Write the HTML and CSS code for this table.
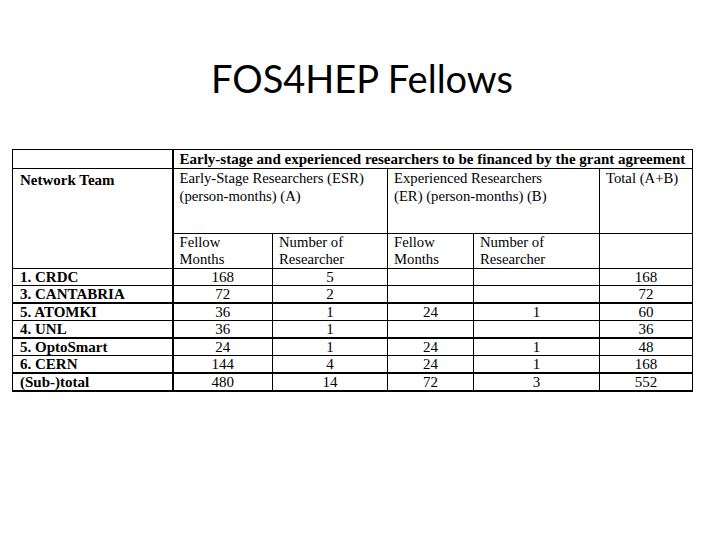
FILE: index.html
```html
<!DOCTYPE html>
<html>
<head>
<meta charset="utf-8">
<link rel="stylesheet" href="styles.css">
</head>
<body>
<h1 class="title">FOS4HEP Fellows</h1>
<table class="grid">
  <colgroup>
    <col class="c1"><col class="c2"><col class="c3"><col class="c4"><col class="c5"><col class="c6">
  </colgroup>
  <tr class="r-head">
    <td class="left-col"></td>
    <td colspan="5" class="bold">Early-stage and experienced researchers to be financed by the grant agreement</td>
  </tr>
  <tr class="r-desc">
    <td rowspan="2" class="left-col bold top nt">Network Team</td>
    <td colspan="2" class="top">Early-Stage Researchers (ESR)<br>(person-months) (A)</td>
    <td colspan="2" class="top">Experienced Researchers<br>(ER) (person-months) (B)</td>
    <td class="top">Total (A+B)</td>
  </tr>
  <tr class="r-sub">
    <td class="top">Fellow<br>Months</td>
    <td class="top">Number of<br>Researcher</td>
    <td class="top">Fellow<br>Months</td>
    <td class="top">Number of<br>Researcher</td>
    <td></td>
  </tr>
  <tr class="r-data">
    <td class="left-col bold">1. CRDC</td><td class="num">168</td><td class="num">5</td><td class="num"></td><td class="num"></td><td class="num">168</td>
  </tr>
  <tr class="r-data">
    <td class="left-col bold">3. CANTABRIA</td><td class="num">72</td><td class="num">2</td><td class="num"></td><td class="num"></td><td class="num">72</td>
  </tr>
  <tr class="r-data thick">
    <td class="left-col bold">5. ATOMKI</td><td class="num">36</td><td class="num">1</td><td class="num">24</td><td class="num">1</td><td class="num">60</td>
  </tr>
  <tr class="r-data">
    <td class="left-col bold">4. UNL</td><td class="num">36</td><td class="num">1</td><td class="num"></td><td class="num"></td><td class="num">36</td>
  </tr>
  <tr class="r-data thick">
    <td class="left-col bold">5. OptoSmart</td><td class="num">24</td><td class="num">1</td><td class="num">24</td><td class="num">1</td><td class="num">48</td>
  </tr>
  <tr class="r-data">
    <td class="left-col bold">6. CERN</td><td class="num">144</td><td class="num">4</td><td class="num">24</td><td class="num">1</td><td class="num">168</td>
  </tr>
  <tr class="r-data thick last">
    <td class="left-col bold">(Sub-)total</td><td class="num">480</td><td class="num">14</td><td class="num">72</td><td class="num">3</td><td class="num">552</td>
  </tr>
</table>
</body>
</html>
```
FILE: styles.css
```css
html, body {
  margin: 0;
  padding: 0;
  background: #fff;
}
.title {
  margin: 0;
  padding-top: 55px;
  height: 97px;
  box-sizing: border-box;
  text-align: center;
  font-family: "Lato", "Open Sans", sans-serif;
  font-weight: normal;
  font-size: 38px;
  line-height: 46px;
  color: #000;
  padding-left: 4px;
}
.grid {
  margin-top: 52px;
  margin-left: 12px;
  border-collapse: collapse;
  table-layout: fixed;
  width: 681px;
  font-family: "Liberation Serif", "Times New Roman", serif;
  font-size: 14.7px;
  line-height: 18px;
  color: #000;
}
.c1 { width: 160px; }
.c2 { width: 100px; }
.c3 { width: 115px; }
.c4 { width: 86px; }
.c5 { width: 126px; }
.c6 { width: 93px; }
.grid td {
  border: 1px solid #000;
  padding: 0 0 0 6px;
  white-space: nowrap;
  overflow: hidden;
  vertical-align: middle;
}
.grid td.left-col {
  border-right: 2px solid #000;
  padding-left: 7px;
}
.grid td.top { vertical-align: top; }
.grid td.nt { padding-top: 2px; }
.bold { font-weight: bold; font-size: 15px; }
.r-head td { height: 18px; }
.r-desc td { height: 64px; }
.r-sub td { height: 33px; line-height: 17px; }
.r-data td { height: 16px; line-height: 16px; }
.r-data.thick td { border-top: 2px solid #000; }
.r-data.last td { border-bottom: 2px solid #000; }
.grid td.num {
  text-align: center;
  padding: 0;
  font-size: 15px;
}
```
